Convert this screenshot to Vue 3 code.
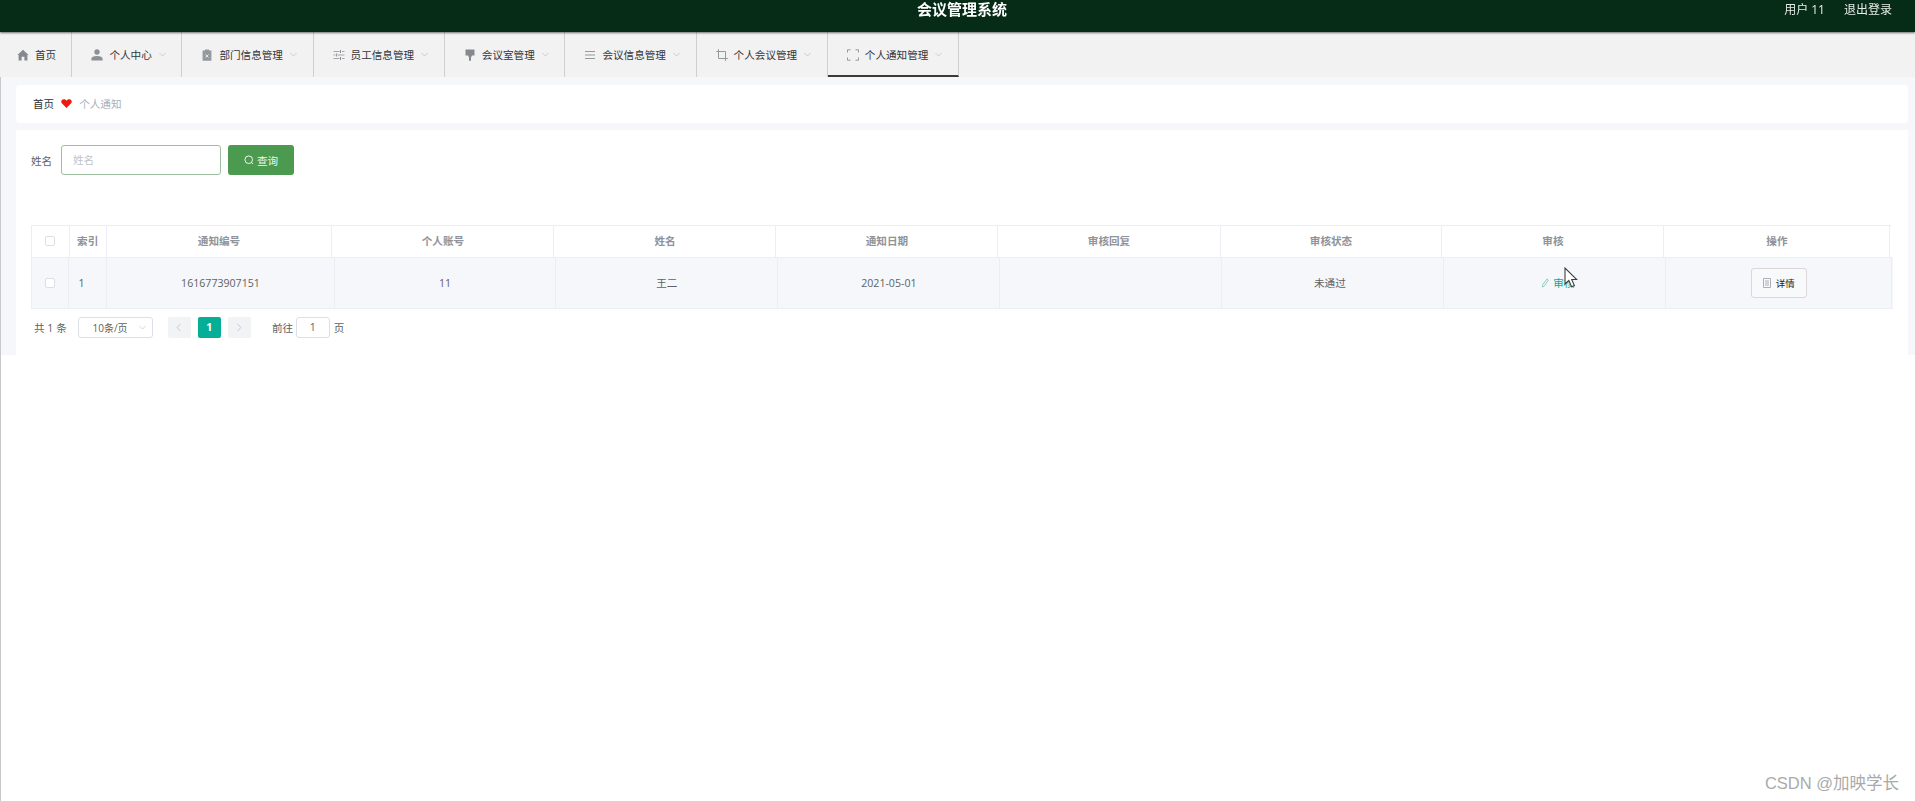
<script setup>
const tabs = [
  { name: '个人中心', icon: 'user' },
  { name: '部门信息管理', icon: 'clip' },
  { name: '员工信息管理', icon: 'sliders' },
  { name: '会议室管理', icon: 'pin' },
  { name: '会议信息管理', icon: 'lines' },
  { name: '个人会议管理', icon: 'crop' },
  { name: '个人通知管理', icon: 'full', active: true }
]
const heads = ['通知编号', '个人账号', '姓名', '通知日期', '审核回复', '审核状态', '审核', '操作']
const cells = ['1616773907151', '11', '王二', '2021-05-01', '', '未通过']
</script>

<template>
  <div class="page">
    <header class="top">
      <div class="title">会议管理系统</div>
      <div class="user"><span>用户 11</span><span class="logout">退出登录</span></div>
    </header>

    <nav class="nav">
      <div class="tab home">
        <svg class="ic" viewBox="0 0 12 12"><path d="M6 .8 11.6 6H10.4V11.4H7.4V7.8H4.6V11.4H1.6V6H.4Z" fill="#85898f"/></svg>
        <span>首页</span>
      </div>
      <div v-for="t in tabs" :key="t.name" class="tab" :class="{ active: t.active }">
        <svg class="ic" viewBox="0 0 12 12">
          <g v-if="t.icon === 'user'" fill="#8d9094"><circle cx="6" cy="3" r="2.7"/><path d="M.4 11.6V9.8C.4 7.8 2.6 7 6 7s5.600.8 5.600 2.800v1.800Z"/></g>
          <g v-else-if="t.icon === 'clip'"><path d="M1.600 1.400H4V.4H8V1.400H10.400V11.800H1.600Z" fill="#95989c"/><path d="M4.500 5.500 7.500 8.500M7.500 5.500 4.500 8.500" stroke="#e6e6e6"/></g>
          <g v-else-if="t.icon === 'sliders'" stroke="#a4a7ab" fill="none"><path d="M.5 2.500H6.500M9 2.500H11.500M.5 6H2.500M5 6H11.500M.5 9.500H6.500M9 9.500H11.500"/><path d="M7.500 1V4M3.700 4.500V7.500M7.500 8V11" stroke="#85888c"/></g>
          <g v-else-if="t.icon === 'pin'" fill="#85898f"><path d="M1.500.4H10.500V6.500H8L7 8.500V11.800H5V8.500L4 6.500H1.500Z"/></g>
          <g v-else-if="t.icon === 'lines'" stroke="#95989c" fill="none"><path d="M1 2.500H11M1 6H11M1 9.500H11"/></g>
          <g v-else-if="t.icon === 'crop'" stroke="#95989c" fill="none"><path d="M2.500 .3V9.500H11.800M.3 2.500H9.500V11.800"/></g>
          <g v-else stroke="#95989c" fill="none"><path d="M.5 3.500V.8H3.500M8.500.8H11.500V3.500M11.500 8.500V11.200H8.500M3.500 11.200H.5V8.500"/></g>
        </svg>
        <span>{{ t.name }}</span>
        <svg class="chev" viewBox="0 0 8 5"><path d="M.5.7 4 4.300 7.500.7" fill="none" stroke="#b9bcc0" stroke-width=".8"/></svg>
      </div>
    </nav>

    <main class="content">
      <div class="crumb">
        <span class="c1">首页</span>
        <svg class="heart" viewBox="0 0 12 10"><path d="M6 10 .8 4.800C-.6 3.200.3.300 3 .200 4.400.1 5.500.9 6 2 6.500.9 7.600.1 9 .200c2.700.1 3.600 3 2.200 4.600Z" fill="#ee1a12"/></svg>
        <span class="c2">个人通知</span>
      </div>

      <section class="card">
        <div class="search">
          <label>姓名</label>
          <div class="input">姓名</div>
          <button class="btn">
            <svg viewBox="0 0 11 11"><circle cx="5.200" cy="5.200" r="4.200" fill="none" stroke="#fff"/><path d="M8 8 10 10" stroke="#fff"/></svg>
            <span>查询</span>
          </button>
        </div>

        <div class="thead">
          <div class="th"><i class="check"></i></div>
          <div class="th">索引</div>
          <div v-for="h in heads" :key="h" class="th">{{ h }}</div>
        </div>
        <div class="trow">
          <div class="td"><i class="check"></i></div>
          <div class="td left">1</div>
          <div v-for="(c, i) in cells" :key="i" class="td">{{ c }}</div>
          <div class="td audit">
            <svg viewBox="0 0 8 10"><path d="M6 .8 1.600 7 1.300 9 3.200 8.200 7.400 2Z" fill="none" stroke="#8cd0c2"/></svg>
            <span>审核</span>
            <svg class="cursor" viewBox="0 0 14 21"><path d="M1 1V17L4.800 13.500 7.600 19.800 10.400 18.600 7.700 12.500H12.800Z" fill="#fff" stroke="#39423f" stroke-width="1.100"/></svg>
          </div>
          <div class="td">
            <button class="detail">
              <svg viewBox="0 0 8 10"><path d="M.5.5H7.500V9.500H.5ZM2 3H6M2 5H6M2 7H6" fill="none" stroke="#9a9da1" stroke-width=".8"/></svg>
              <span>详情</span>
            </button>
          </div>
        </div>

        <div class="pager">
          <span class="total">共 1 条</span>
          <div class="size">
            <span>10条/页</span>
            <svg viewBox="0 0 8 5"><path d="M.5.7 4 4.300 7.500.7" fill="none" stroke="#c0c4cc" stroke-width=".8"/></svg>
          </div>
          <div class="pbtn prev"><svg viewBox="0 0 6 10"><path d="M4.500 1 1 5 4.500 9" fill="none" stroke="#c0c4cc"/></svg></div>
          <div class="pbtn cur">1</div>
          <div class="pbtn"><svg viewBox="0 0 6 10"><path d="M1.500 1 5 5 1.500 9" fill="none" stroke="#c0c4cc"/></svg></div>
          <span class="goto">前往</span>
          <div class="jump">1</div>
          <span class="unit">页</span>
        </div>
      </section>
    </main>

    <div class="mark">CSDN @加映学长</div>
  </div>
</template>

<style>
html, body { margin: 0; background: #fff; overflow: hidden; }
</style>

<style scoped>
.page {
  position: relative;
  height: 801px;
  box-sizing: border-box;
  border-left: 1px solid #c9c9c9;
  font-family: "Open Sans", "Noto Sans CJK SC", sans-serif;
  font-size: 10.6px;
  color: #606266;
  background: #fff;
  filter: blur(0.4px);
}
.top {
  position: relative;
  height: 32px;
  margin-left: -1px;
  background: #062c17;
  box-shadow: 0 1px 2px rgba(0, 0, 0, .55);
  color: #fff;
  display: flex;
  justify-content: flex-end;
  padding-right: 23px;
  z-index: 1;
}
.title {
  position: absolute;
  left: 917px;
  top: 0;
  font-size: 15px;
  line-height: 18px;
  font-weight: 700;
}
.user {
  display: flex;
  gap: 19px;
  font-size: 12px;
  line-height: 20px;
  color: #e6ece8;
}
.nav {
  height: 45px;
  margin-left: -1px;
  background: #f2f2f2;
  display: flex;
  color: #33363a;
}
.tab {
  display: flex;
  align-items: center;
  box-sizing: border-box;
  height: 45px;
  padding: 0 15.650px 0 19px;
  border-right: 1px solid #cfcfcf;
}
.tab.home { padding: 0 15.200px 0 17px; }
.tab.active { border-bottom: 2px solid #3a3a3a; padding-top: 2px; }
.ic { width: 12px; height: 12px; margin-right: 6px; flex: none; }
.chev { width: 7px; height: 5px; margin-left: 7px; flex: none; }
.content {
  height: 278px;
  box-sizing: border-box;
  padding: 8px 7px 0 15px;
  background: #f5f7fa;
}
.crumb {
  height: 38px;
  box-sizing: border-box;
  padding: 0 0 2px 17px;
  background: #fff;
  border-radius: 3px;
  display: flex;
  align-items: center;
}
.c1 { color: #303133; }
.heart { width: 11px; height: 9px; margin: 0 7px; }
.c2 { color: #a8b0bf; }
.card {
  height: 225px;
  margin-top: 7px;
  background: #fff;
  box-sizing: border-box;
  padding: 15px 15px 0 15px;
}
.search {
  display: flex;
  align-items: center;
  height: 30px;
}
.search label { width: 30px; color: #606266; }
.input {
  width: 160px;
  height: 30px;
  box-sizing: border-box;
  border: 1px solid #9cc09f;
  border-radius: 3px;
  padding-left: 11px;
  line-height: 28px;
  color: #c0c4cc;
  background: #fff;
}
.btn {
  width: 66px;
  height: 30px;
  margin-left: 7px;
  border: 0;
  border-radius: 3px;
  background: #4b9a50;
  color: #f0f6f0;
  font: inherit;
  display: flex;
  align-items: center;
  justify-content: center;
  gap: 3px;
}
.btn svg { width: 10px; height: 10px; }
.thead, .trow { display: grid; color: #909399; }
.thead {
  margin-top: 50px;
  height: 32px;
  width: 1859.500px;
  grid-template-columns: 38.600px 37.100px 225.700px 222.100px 222px 222px 222.100px 221.900px 221.900px 226.100px;
  border-top: 1px solid #ebeef5;
  box-sizing: border-box;
  font-weight: 600;
}
.trow {
  height: 52px;
  width: 1861.500px;
  grid-template-columns: 38.400px 37.900px 227.400px 221.600px 222.100px 222px 222px 222px 221.800px 226.300px;
  background: #f5f7fa;
  color: #606266;
  border-top: 1px solid #ebeef5;
  border-bottom: 1px solid #ebeef5;
  box-sizing: border-box;
}
.th, .td {
  display: flex;
  align-items: center;
  justify-content: center;
  border-right: 1px solid #ebeef5;
  box-sizing: border-box;
  position: relative;
}
.th { padding-bottom: 2px; }
.td { padding-bottom: 1px; }
.td:nth-child(8) { padding-right: 6px; }
.th:first-child, .td:first-child { border-left: 1px solid #ebeef5; }
.td.left { justify-content: flex-start; padding-left: 9px; }
.check {
  display: block;
  width: 10px;
  height: 10px;
  border: 1px solid #dcdfe6;
  border-radius: 2px;
  background: #fff;
  box-sizing: border-box;
}
.audit { color: #05ae96; gap: 4px; padding-left: 6px; }
.audit > svg:first-child { width: 8px; height: 10px; }
.cursor {
  position: absolute;
  left: 120px;
  top: 9px;
  width: 14px;
  height: 21px;
}
.detail {
  width: 56px;
  height: 30px;
  box-sizing: border-box;
  border: 1px solid #dcd6da;
  border-radius: 3px;
  background: #f8f9fb;
  color: #222;
  font: inherit;
  font-size: 9.500px;
  display: flex;
  align-items: center;
  justify-content: center;
  gap: 5px;
}
.detail svg { width: 8px; height: 10px; }
.pager {
  display: flex;
  align-items: center;
  height: 22px;
  margin-top: 7px;
  color: #606266;
}
.total { margin-left: 3px; width: 43.500px; }
.size {
  width: 75px;
  height: 21px;
  box-sizing: border-box;
  border: 1px solid #dcdfe6;
  border-radius: 3px;
  display: flex;
  align-items: center;
  justify-content: space-between;
  padding: 0 6px 0 14px;
  font-size: 10px;
}
.size svg { width: 7px; height: 5px; }
.pbtn {
  width: 22.500px;
  height: 21px;
  margin-left: 7.500px;
  border-radius: 2px;
  background: #f2f3f5;
  display: flex;
  align-items: center;
  justify-content: center;
}
.pbtn svg { width: 6px; height: 9px; }
.pbtn.prev { margin-left: 15.500px; }
.pbtn.cur { background: #05ae96; color: #fff; font-weight: 700; }
.goto { margin-left: 21.500px; }
.jump {
  width: 34px;
  height: 21px;
  margin-left: 2.500px;
  box-sizing: border-box;
  border: 1px solid #dcdfe6;
  border-radius: 3px;
  text-align: center;
  line-height: 19px;
}
.unit { margin-left: 4px; }
.mark {
  position: absolute;
  right: 16px;
  top: 773px;
  font-family: "Liberation Sans", "Noto Sans CJK SC", sans-serif;
  font-size: 16.500px;
  line-height: 20px;
  color: #aaa;
}
</style>
